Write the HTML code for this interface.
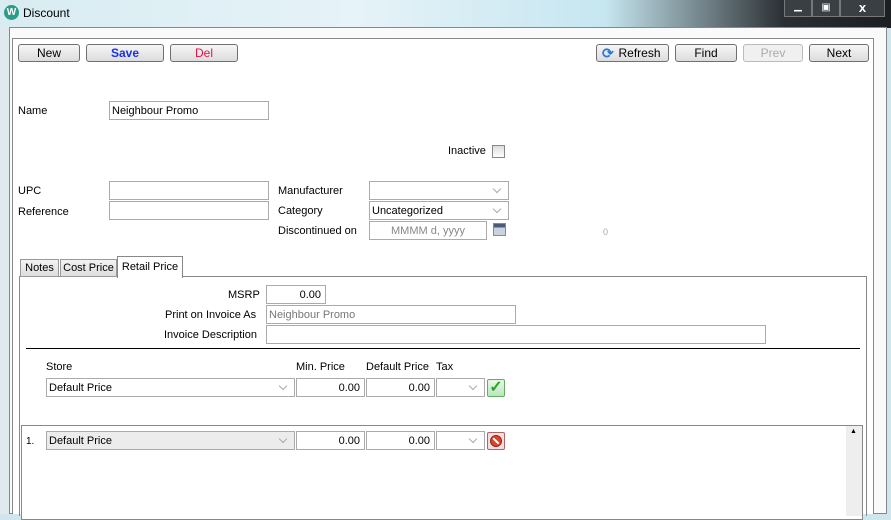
<!DOCTYPE html>
<html><head><style>
*{box-sizing:border-box;margin:0;padding:0}
body{width:891px;height:514px;overflow:hidden;position:relative;font-family:"Liberation Sans",sans-serif;font-size:11px;color:#000;background:#cfe6ee}
.a{position:absolute}
.btn{position:absolute;height:18px;border:1px solid #707070;border-radius:3px;background:linear-gradient(#f6f6f6,#dcdcdc);text-align:center;line-height:16px;font-size:12px}
.in{position:absolute;height:19px;border:1px solid #ababab;background:#fff;padding:3px 2px 0;line-height:13px;white-space:nowrap}
.r{text-align:right;padding-right:4px}
.dd::after{content:"";position:absolute;right:8px;top:4px;width:5px;height:5px;border-right:1px solid #aaa;border-bottom:1px solid #aaa;transform:rotate(45deg)}
.lbl{position:absolute;white-space:nowrap;margin-top:1px}
</style></head><body>
<div class="a" style="left:0;top:0;width:891px;height:28px;background:linear-gradient(90deg,#d8ecf2,#e6f3f8 40%,#c6e6f0 68%,#6a7a80 80%,#2a2f33 88%,#1c1f22)"></div>
<div class="a" style="left:4px;top:5px;width:15px;height:15px;border-radius:50%;background:#2a9c8c;color:#fff;font-weight:bold;font-size:10px;text-align:center;line-height:15px">W</div>
<div class="a" style="left:23px;top:6px;font-size:12px">Discount</div>
<div class="a" style="left:784px;top:0;width:28px;height:17px;border:1px solid #777;border-top:0;background:#3a3f44;color:#fff;text-align:center;font-size:10px;line-height:14px">▁</div>
<div class="a" style="left:812px;top:0;width:28px;height:17px;border:1px solid #777;border-top:0;background:#3a3f44;color:#fff;text-align:center;font-size:10px;line-height:15px">▣</div>
<div class="a" style="left:840px;top:0;width:45px;height:17px;border:1px solid #777;border-top:0;background:#3a3f44;color:#fff;text-align:center;font-size:13px;font-weight:bold;line-height:15px">x</div>
<div class="a" style="left:0;top:28px;width:9px;height:486px;background:#dfe9ee"></div>
<div class="a" style="left:9px;top:27px;width:878px;height:487px;background:#fafafa;border:1px solid #888"></div>
<div class="a" style="left:12px;top:38px;width:862px;height:476px;background:#fff;border:1px solid #888;border-bottom:0"></div>

<div class="btn" style="left:18px;top:44px;width:62px">New</div>
<div class="btn" style="left:86px;top:44px;width:78px;color:#1830e8;font-weight:bold">Save</div>
<div class="btn" style="left:170px;top:44px;width:68px;color:#e8104a">Del</div>
<div class="btn" style="left:596px;top:44px;width:73px;padding-left:14px"><span style="position:absolute;left:5px;top:0;color:#2a78d8;font-size:14px;font-weight:bold">⟳</span>Refresh</div>
<div class="btn" style="left:675px;top:44px;width:62px">Find</div>
<div class="btn" style="left:743px;top:44px;width:60px;color:#aaa;border-color:#bbb;background:#f0f0f0">Prev</div>
<div class="btn" style="left:809px;top:44px;width:60px">Next</div>

<div class="lbl" style="left:18px;top:104px">Name</div>
<div class="in" style="left:109px;top:101px;width:160px">Neighbour Promo</div>
<div class="lbl" style="left:448px;top:144px">Inactive</div>
<div class="a" style="left:492px;top:145px;width:13px;height:13px;border:1px solid #888;background:linear-gradient(#ddd,#fff)"></div>
<div class="lbl" style="left:18px;top:184px">UPC</div>
<div class="in" style="left:109px;top:181px;width:160px"></div>
<div class="lbl" style="left:18px;top:205px">Reference</div>
<div class="in" style="left:109px;top:201px;width:160px"></div>
<div class="lbl" style="left:278px;top:184px">Manufacturer</div>
<div class="in dd" style="left:369px;top:181px;width:140px"></div>
<div class="lbl" style="left:278px;top:204px">Category</div>
<div class="in dd" style="left:369px;top:201px;width:140px">Uncategorized</div>
<div class="lbl" style="left:278px;top:224px">Discontinued on</div>
<div class="in" style="left:369px;top:221px;width:118px;color:#888;text-align:center">MMMM d, yyyy</div>
<div class="a" style="left:493px;top:223px;width:13px;height:13px;background:linear-gradient(#4a5c7a 30%,#c9d3de 30%);border:1px solid #889"></div>
<div class="lbl" style="left:603px;top:226px;color:#aaa;font-size:9px">0</div>

<div class="a" style="left:19px;top:276px;width:848px;height:240px;border:1px solid #888;border-bottom:0"></div>
<div class="a" style="left:20px;top:259px;width:39px;height:18px;border:1px solid #999;background:linear-gradient(#f2f2f2,#dedede);text-align:center;line-height:17px">Notes</div>
<div class="a" style="left:60px;top:259px;width:57px;height:18px;border:1px solid #999;background:linear-gradient(#f2f2f2,#dedede);text-align:center;line-height:17px">Cost Price</div>
<div class="a" style="left:117px;top:256px;width:66px;height:22px;border:1px solid #888;border-bottom:0;background:#fff;text-align:center;line-height:20px">Retail Price</div>

<div class="lbl" style="left:228px;top:288px">MSRP</div>
<div class="in r" style="left:266px;top:285px;width:60px">0.00</div>
<div class="lbl" style="left:165px;top:308px">Print on Invoice As</div>
<div class="in" style="left:266px;top:305px;width:250px;color:#777">Neighbour Promo</div>
<div class="lbl" style="left:164px;top:328px">Invoice Description</div>
<div class="in" style="left:266px;top:325px;width:500px"></div>
<div class="a" style="left:26px;top:348px;width:834px;height:1px;background:#000"></div>

<div class="lbl" style="left:46px;top:360px">Store</div>
<div class="lbl" style="left:296px;top:360px">Min. Price</div>
<div class="lbl" style="left:366px;top:360px">Default Price</div>
<div class="lbl" style="left:436px;top:360px">Tax</div>
<div class="in dd" style="left:46px;top:378px;width:249px">Default Price</div>
<div class="in r" style="left:296px;top:378px;width:69px">0.00</div>
<div class="in r" style="left:366px;top:378px;width:69px">0.00</div>
<div class="in dd" style="left:436px;top:378px;width:49px"></div>
<div class="a" style="left:487px;top:379px;width:18px;height:18px;border:1px solid #6a6;border-radius:2px;background:linear-gradient(#e8f8e8,#b9e6b9);color:#2aa52a;font-size:16px;font-weight:bold;line-height:16px;text-align:center">✓</div>

<div class="a" style="left:21px;top:425px;width:842px;height:95px;border:1px solid #888;background:#fff"></div>
<div class="a" style="left:846px;top:426px;width:16px;height:90px;background:#eee"></div>
<div class="a" style="left:850px;top:428px;font-size:7px">▲</div>
<div class="lbl" style="left:26px;top:435px;font-size:10px">1.</div>
<div class="in dd" style="left:46px;top:431px;width:249px;background:#ececec">Default Price</div>
<div class="in r" style="left:296px;top:431px;width:69px">0.00</div>
<div class="in r" style="left:366px;top:431px;width:69px">0.00</div>
<div class="in dd" style="left:436px;top:431px;width:49px"></div>
<div class="a" style="left:487px;top:432px;width:18px;height:18px;border:1px solid #a66;border-radius:2px;background:#f3dede"><div style="position:absolute;left:2px;top:2px;width:12px;height:12px;border-radius:50%;background:#d42;border:1px solid #922"><div style="position:absolute;left:1px;top:4px;width:8px;height:2px;background:#fff;transform:rotate(45deg)"></div></div></div>
</body></html>
